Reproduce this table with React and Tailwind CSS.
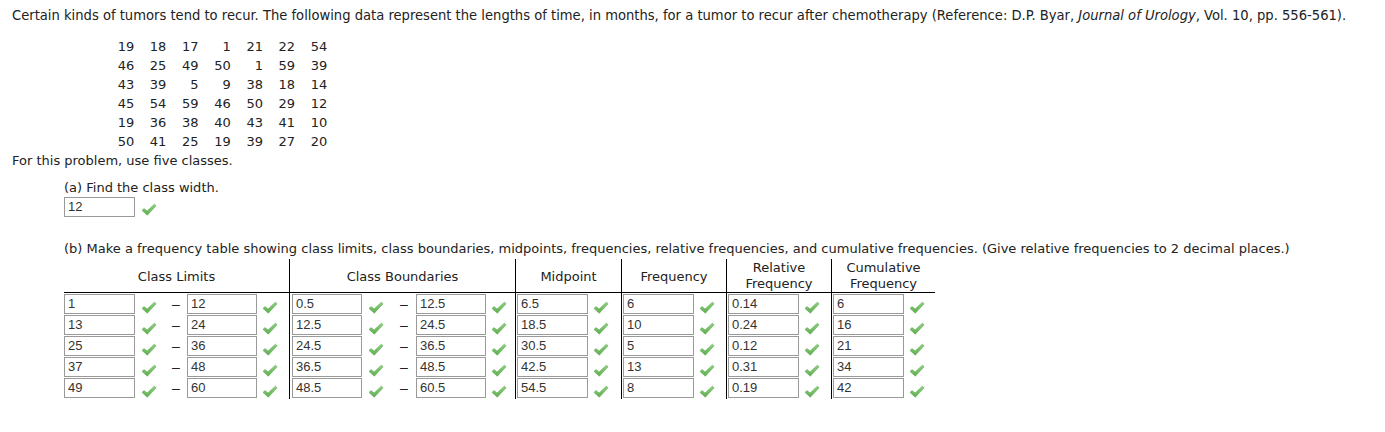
import React from "react";

const data = [
  [19, 18, 17, 1, 21, 22, 54],
  [46, 25, 49, 50, 1, 59, 39],
  [43, 39, 5, 9, 38, 18, 14],
  [45, 54, 59, 46, 50, 29, 12],
  [19, 36, 38, 40, 43, 41, 10],
  [50, 41, 25, 19, 39, 27, 20],
];

const rows = [
  ["1", "12", "0.5", "12.5", "6.5", "6", "0.14", "6"],
  ["13", "24", "12.5", "24.5", "18.5", "10", "0.24", "16"],
  ["25", "36", "24.5", "36.5", "30.5", "5", "0.12", "21"],
  ["37", "48", "36.5", "48.5", "42.5", "13", "0.31", "34"],
  ["49", "60", "48.5", "60.5", "54.5", "8", "0.19", "42"],
];

const Check = ({ className = "" }) => (
  <svg width="16" height="13" viewBox="0 0 16 13" className={"shrink-0 " + className}>
    <defs>
      <linearGradient id="ck" x1="0" y1="0" x2="0" y2="1">
        <stop offset="0" stopColor="#8fd27f" />
        <stop offset="1" stopColor="#5fae50" />
      </linearGradient>
    </defs>
    <path
      d="M1 7.4 L3 5.6 L6.1 8 L13.4 1.2 L15.1 2.8 L6.3 12.2 Z"
      fill="url(#ck)"
      stroke="#62a956"
      strokeWidth="0.6"
      strokeLinejoin="round"
    />
  </svg>
);

// answer box, looks like the old webwork inputs
const Box = ({ value, w = "w-[71px]" }) => (
  <div
    className={`${w} h-[20px] shrink-0 border border-[#9a9a9a] bg-white pl-[3px] text-[13px] leading-[18px] text-[#333]`}
    style={{ fontFamily: '"Liberation Sans", Arial, sans-serif' }}
  >
    {value}
  </div>
);

const Dash = ({ className = "" }) => (
  <span
    className={"shrink-0 text-center text-[14px] leading-[20px] text-[#222] " + className}
    style={{ fontFamily: '"Liberation Sans", Arial, sans-serif' }}
  >
    –
  </span>
);

export default function App() {
  return (
    <div
      className="w-[1385px] h-[432px] bg-white text-[13px] text-[#222] overflow-hidden"
      style={{ fontFamily: '"DejaVu Sans", Verdana, sans-serif' }}
    >
      <p
        className="pl-[12px] pt-[7px] text-[14.6px] leading-[16px] whitespace-nowrap"
        style={{ fontFamily: '"DejaVu Sans Condensed", "DejaVu Sans", sans-serif' }}
      >
        Certain kinds of tumors tend to recur. The following data represent the lengths of time, in months,
        for a tumor to recur after chemotherapy (Reference: D.P. Byar, <i>Journal of Urology</i>, Vol. 10,
        pp. 556-561).
      </p>

      <div className="mt-[14px] ml-[102px]">
        {data.map((r, i) => (
          <div key={i} className="flex h-[19px] leading-[19px]">
            {r.map((n, j) => (
              <span key={j} className="w-[32.2px] text-right">
                {n}
              </span>
            ))}
          </div>
        ))}
      </div>

      <p className="pl-[12px] mt-[2px] leading-[16px]">For this problem, use five classes.</p>

      <div className="ml-[64px] mt-[11px]">
        <p className="leading-[16px]">(a) Find the class width.</p>
        <div className="flex items-end mt-[1px]">
          <Box value="12" />
          <Check className="ml-[6px] mb-[1px]" />
        </div>
      </div>

      <div className="ml-[64px] mt-[24px]">
        <p className="leading-[16px] whitespace-nowrap">
          (b) Make a frequency table showing class limits, class boundaries, midpoints, frequencies, relative
          frequencies, and cumulative frequencies. (Give relative frequencies to 2 decimal places.)
        </p>

        <div className="mt-[2px] w-[871px]">
          <div className="flex h-[34px] border-b border-black text-[13px]">
            <div className="w-[225px] flex items-center justify-center pt-[2px]">Class Limits</div>
            <div className="w-[226px] border-l border-black flex items-center justify-center pt-[2px]">
              Class Boundaries
            </div>
            <div className="w-[106px] border-l border-black flex items-center justify-center pt-[2px]">
              Midpoint
            </div>
            <div className="w-[105px] border-l border-black flex items-center justify-center pt-[2px]">
              Frequency
            </div>
            <div className="w-[105px] border-l border-black flex flex-col items-center justify-center leading-[16px] pt-[1px]">
              <span>Relative</span>
              <span>Frequency</span>
            </div>
            <div className="w-[104px] border-l border-black flex flex-col items-center justify-center leading-[16px] pt-[1px]">
              <span>Cumulative</span>
              <span>Frequency</span>
            </div>
          </div>

          <div className="flex">
            <div className="w-[225px]">
              {rows.map((r, i) => (
                <div key={i} className="flex items-end h-[21px]">
                  <Box value={r[0]} />
                  <Check className="ml-[6px]" />
                  <Dash className="w-[10px] ml-[14px] mr-[6px]" />
                  <Box value={r[1]} w="w-[70px]" />
                  <Check className="ml-[5px]" />
                </div>
              ))}
            </div>
            <div className="w-[226px] border-l border-black pb-[1px]">
              {rows.map((r, i) => (
                <div key={i} className="flex items-end h-[21px] pl-[2px]">
                  <Box value={r[2]} w="w-[70px]" />
                  <Check className="ml-[6px]" />
                  <Dash className="w-[10px] ml-[15px] mr-[7px]" />
                  <Box value={r[3]} w="w-[70px]" />
                  <Check className="ml-[5px]" />
                </div>
              ))}
            </div>
            {[
              [4, "w-[106px]"],
              [5, "w-[105px]"],
              [6, "w-[105px]"],
              [7, "w-[104px]"],
            ].map(([k, w]) => (
              <div key={k} className={`${w} border-l border-black pb-[1px]`}>
                {rows.map((r, i) => (
                  <div key={i} className="flex items-end h-[21px] pl-[1px]">
                    <Box value={r[k]} />
                    <Check className="ml-[5px]" />
                  </div>
                ))}
              </div>
            ))}
          </div>
        </div>
      </div>
    </div>
  );
}
